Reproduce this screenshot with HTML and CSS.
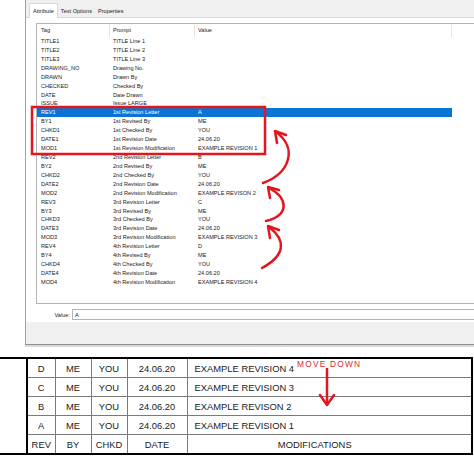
FILE: index.html
```html
<!DOCTYPE html>
<html>

<head>
  <title>Attribute - Revisions</title>
  <link rel="stylesheet" href="styles.css">
</head>

<body>
  <div class="page">
    <div class="dialog">
      <div class="tabs">
        <span class="tab active">Attribute</span>
        <span class="tab">Text Options</span>
        <span class="tab">Properties</span>
      </div>
      <div class="tab-page">
        <div class="list">
          <div class="row list-head"><span>Tag</span><span>Prompt</span><span>Value</span></div>
          <div class="row"><span>TITLE1</span><span>TITLE Line 1</span><span></span></div>
          <div class="row"><span>TITLE2</span><span>TITLE Line 2</span><span></span></div>
          <div class="row"><span>TITLE3</span><span>TITLE Line 3</span><span></span></div>
          <div class="row"><span>DRAWING_NO</span><span>Drawing No.</span><span></span></div>
          <div class="row"><span>DRAWN</span><span>Drawn By</span><span></span></div>
          <div class="row"><span>CHECKED</span><span>Checked By</span><span></span></div>
          <div class="row"><span>DATE</span><span>Date Drawn</span><span></span></div>
          <div class="row"><span>ISSUE</span><span>Issue LARGE</span><span></span></div>
          <div class="row sel"><span>REV1</span><span>1st Revision Letter</span><span>A</span></div>
          <div class="row"><span>BY1</span><span>1st Revised By</span><span>ME</span></div>
          <div class="row"><span>CHKD1</span><span>1st Checked By</span><span>YOU</span></div>
          <div class="row"><span>DATE1</span><span>1st Revision Date</span><span>24.06.20</span></div>
          <div class="row"><span>MOD1</span><span>1st Revision Modification</span><span>EXAMPLE REVISION 1</span></div>
          <div class="row"><span>REV2</span><span>2nd Revision Letter</span><span>B</span></div>
          <div class="row"><span>BY2</span><span>2nd Revised By</span><span>ME</span></div>
          <div class="row"><span>CHKD2</span><span>2nd Checked By</span><span>YOU</span></div>
          <div class="row"><span>DATE2</span><span>2nd Revision Date</span><span>24.06.20</span></div>
          <div class="row"><span>MOD2</span><span>2nd Revision Modification</span><span>EXAMPLE REVISON 2</span></div>
          <div class="row"><span>REV3</span><span>3rd Revision Letter</span><span>C</span></div>
          <div class="row"><span>BY3</span><span>3rd Revised By</span><span>ME</span></div>
          <div class="row"><span>CHKD3</span><span>3rd Checked By</span><span>YOU</span></div>
          <div class="row"><span>DATE3</span><span>3rd Revision Date</span><span>24.06.20</span></div>
          <div class="row"><span>MOD3</span><span>3rd Revision Modification</span><span>EXAMPLE REVISION 3</span></div>
          <div class="row"><span>REV4</span><span>4th Revision Letter</span><span>D</span></div>
          <div class="row"><span>BY4</span><span>4th Revised By</span><span>ME</span></div>
          <div class="row"><span>CHKD4</span><span>4th Checked By</span><span>YOU</span></div>
          <div class="row"><span>DATE4</span><span>4th Revision Date</span><span>24.06.20</span></div>
          <div class="row"><span>MOD4</span><span>4th Revision Modification</span><span>EXAMPLE REVISION 4</span></div>
        </div>
        <div class="value-row">
          <span class="value-label">Value:</span>
          <div class="value-input">A</div>
        </div>
      </div>
      <div class="dialog-foot"></div>
    </div>

    <table class="revs">
      <colgroup>
        <col class="c-blank"><col class="c-rev"><col class="c-by"><col class="c-chkd"><col class="c-date"><col>
      </colgroup>
      <tr>
        <td class="blank" rowspan="5"></td>
        <td>D</td><td>ME</td><td>YOU</td><td>24.06.20</td><td class="mod">EXAMPLE REVISION 4</td>
      </tr>
      <tr><td>C</td><td>ME</td><td>YOU</td><td>24.06.20</td><td class="mod">EXAMPLE REVISION 3</td></tr>
      <tr><td>B</td><td>ME</td><td>YOU</td><td>24.06.20</td><td class="mod">EXAMPLE REVISON 2</td></tr>
      <tr><td>A</td><td>ME</td><td>YOU</td><td>24.06.20</td><td class="mod">EXAMPLE REVISION 1</td></tr>
      <tr class="head"><td>REV</td><td>BY</td><td>CHKD</td><td>DATE</td><td class="mod-head">MODIFICATIONS</td></tr>
    </table>

    <!-- red markup drawn over the screenshot -->
    <svg class="marks" width="474" height="456" viewBox="0 0 474 456">
      <g fill="none" stroke="#e3151e" stroke-width="2.5" stroke-linecap="round" stroke-linejoin="round">
        <rect x="32" y="107" width="233" height="47" stroke-linecap="butt" stroke-linejoin="miter"/>
        <path d="M263 183 C290 173, 298 148, 276 132"/>
        <path d="M277 143 L275 131 L286 135"/>
        <path d="M266 221 C290 215, 288 198, 269 188"/>
        <path d="M270 198 L268 187 L279 190"/>
        <path d="M262 268 C286 255, 286 240, 269 227"/>
        <path d="M270 238 L268 226 L279 230"/>
        <path d="M327 369 L327 404"/>
        <path d="M320 395 L327 405 L334 395"/>
      </g>
    </svg>
    <div class="note">MOVE DOWN</div>
  </div>
</body>

</html>
```

FILE: styles.css
```css
body {
margin: 0;
font-family: "Liberation Sans", Arial, sans-serif;
background-color: #fff;
color: #1a1a1a;
}

.page {
position: relative;
width: 474px;
height: 456px;
overflow: hidden;
}

/* dialog screenshot */
.dialog {
margin-left: 25px;
width: 470px;
height: 344px;
display: flex;
flex-direction: column;
background-color: #f0f0f0;
border-left: 1px solid #a0a0a0;
border-bottom: 1px solid #8f8f8f;
box-shadow: 0 2px 0 #dadada;
}

.tabs {
height: 17px;
display: flex;
align-items: flex-end;
padding-left: 3px;
font-size: 5.6px;
}

.tab {
height: 14px;
line-height: 14px;
padding: 0 3px;
position: relative;
top: 1px;
}

.tab.active {
background-color: #fff;
border: 1px solid #d9d9d9;
border-bottom: none;
z-index: 1;
}

.tab-page {
height: 305px;
box-sizing: border-box;
background-color: #fff;
border-top: 1px solid #d9d9d9;
padding: 5px 0 0 10px;
}

.list {
height: 281px;
box-sizing: border-box;
border: 1px solid #b4b4b4;
border-right: none;
font-size: 5.6px;
}

.row {
display: grid;
grid-template-columns: 73px 85px 257px;
height: 8.93px;
line-height: 8.93px;
white-space: nowrap;
}

.row span {
padding-left: 3px;
overflow: hidden;
}

.row span:first-child {
padding-left: 4px;
}

.list-head {
height: 13px;
line-height: 13px;
}

.list-head span {
border-right: 1px solid #e3e3e3;
}

.row.sel {
color: #fff;
}

.row.sel span {
background-color: #0a74d4;
}

.value-row {
display: flex;
align-items: center;
margin-top: 5px;
font-size: 5.6px;
}

.value-label {
width: 34px;
text-align: right;
margin-right: 2px;
}

.value-input {
flex: 1;
height: 11px;
line-height: 11px;
box-sizing: border-box;
border: 1px solid #b4b4b4;
padding-left: 2px;
background-color: #fff;
}

.dialog-foot {
flex: 1;
}

/* revision block of the drawing */
.revs {
margin-top: 12px;
width: 473px;
border-collapse: collapse;
table-layout: fixed;
font-size: 9.4px;
color: #1a1a1a;
border-top: 2px solid #000;
border-bottom: 2px solid #000;
border-right: 2px solid #000;
}

.c-blank { width: 27px; }
.c-rev { width: 28px; }
.c-by { width: 36px; }
.c-chkd { width: 36px; }
.c-date { width: 60px; }

.revs td {
height: 17px;
padding: 1px 0 0;
text-align: center;
border: 1px solid #7a7a7a;
white-space: nowrap;
}

.revs td.blank {
border-left: none;
border-top: 2px solid #000;
border-bottom: 2px solid #000;
border-right: 2px solid #000;
}

.revs td.mod {
text-align: left;
padding-left: 7px;
}

.revs td.mod-head {
padding-right: 29px;
}

.marks {
position: absolute;
left: 0;
top: 0;
pointer-events: none;
}

.note {
position: absolute;
left: 297px;
top: 359px;
font-size: 8.4px;
letter-spacing: 1.2px;
color: #e3262d;
}
```
